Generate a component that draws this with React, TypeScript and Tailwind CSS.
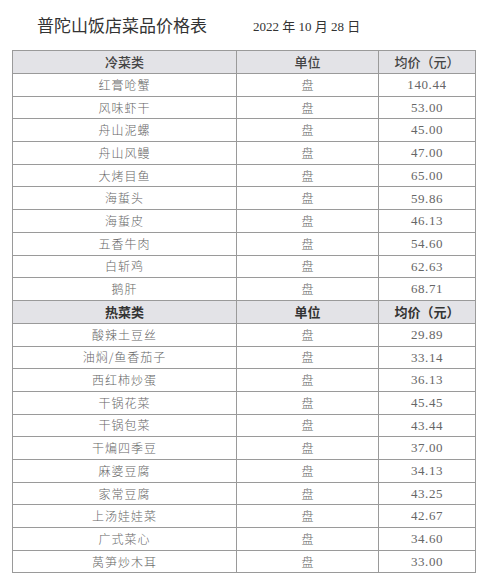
import React from 'react';

const cold: [string, string][] = [
  ['红膏呛蟹', '140.44'],
  ['风味虾干', '53.00'],
  ['舟山泥螺', '45.00'],
  ['舟山风鳗', '47.00'],
  ['大烤目鱼', '65.00'],
  ['海蜇头', '59.86'],
  ['海蜇皮', '46.13'],
  ['五香牛肉', '54.60'],
  ['白斩鸡', '62.63'],
  ['鹅肝', '68.71'],
];

const hot: [string, string][] = [
  ['酸辣土豆丝', '29.89'],
  ['油焖/鱼香茄子', '33.14'],
  ['西红柿炒蛋', '36.13'],
  ['干锅花菜', '45.45'],
  ['干锅包菜', '43.44'],
  ['干煸四季豆', '37.00'],
  ['麻婆豆腐', '34.13'],
  ['家常豆腐', '43.25'],
  ['上汤娃娃菜', '42.67'],
  ['广式菜心', '34.60'],
  ['莴笋炒木耳', '33.00'],
];

const cjk = "font-['Noto_Sans_CJK_SC',sans-serif]";
const num = "font-['Liberation_Serif','Noto_Sans_CJK_SC',serif]";

function Header({ title, bold }: { title: string; bold?: boolean }) {
  const w = bold ? 'font-bold text-[#333]' : 'font-medium text-[#444]';
  return (
    <tr className={`h-[23px] bg-[#e3e3e7] text-[13px] ${w} ${cjk}`}>
      <td className="border border-[#9a9a9a] text-center">{title}</td>
      <td className="border border-[#9a9a9a] text-center">单位</td>
      <td className="border border-[#9a9a9a] text-center">均价（元）</td>
    </tr>
  );
}

function Row({ name, price }: { name: string; price: string }) {
  return (
    <tr className="h-[22.7px] text-[#666]">
      <td className={`border border-[#9a9a9a] text-center text-[12px] tracking-[1px] font-light ${cjk}`}>{name}</td>
      <td className={`border border-[#9a9a9a] text-center text-[12px] font-light ${cjk}`}>盘</td>
      <td className={`border border-[#9a9a9a] text-center text-[13px] tracking-[0.6px] ${num}`}>{price}</td>
    </tr>
  );
}

export default function App() {
  return (
    <div className="w-[500px] h-[573px] bg-white overflow-hidden">
      <div className="flex items-end h-[50px] pb-[17px]">
        <h1 className={`ml-[37px] w-[216px] text-[17px] leading-none text-[#333] ${cjk}`}>普陀山饭店菜品价格表</h1>
        <span className={`text-[13px] leading-none text-[#333] ${num}`}>2022 年 10 月 28 日</span>
      </div>
      <table className="ml-[12px] border-collapse table-fixed w-[463px]">
        <colgroup>
          <col className="w-[224px]" />
          <col className="w-[142px]" />
          <col className="w-[97px]" />
        </colgroup>
        <tbody>
          <Header title="冷菜类" />
          {cold.map(([n, p]) => (
            <Row key={n} name={n} price={p} />
          ))}
          <Header title="热菜类" bold />
          {hot.map(([n, p]) => (
            <Row key={n} name={n} price={p} />
          ))}
        </tbody>
      </table>
    </div>
  );
}
